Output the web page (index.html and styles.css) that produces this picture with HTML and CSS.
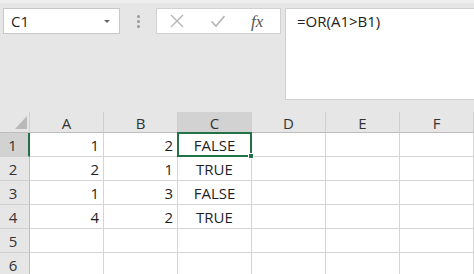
FILE: index.html
```html
<!DOCTYPE html>
<html lang="en">
<head>
    <meta charset="UTF-8">
    <title>OR formula</title>
    <link rel="stylesheet" href="styles.css">
</head>
<body>
    <div class="toolbar">
        <div class="name-box">
            <span>C1</span>
            <svg class="caret" width="8" height="5" viewBox="0 0 8 5"><path d="M1 1h6L4 4z" fill="#666"/></svg>
        </div>
        <div class="grip"><i></i><i></i><i></i></div>
        <div class="buttons">
            <svg class="btn" width="16" height="16" viewBox="0 0 16 16"><path d="M2 2L14 14M14 2L2 14" stroke="#b4b4b4" stroke-width="1.3" fill="none"/></svg>
            <svg class="btn" width="16" height="16" viewBox="0 0 16 16"><path d="M1.5 8.5L6 13L14.5 3" stroke="#b4b4b4" stroke-width="1.6" fill="none"/></svg>
            <span class="fx">fx</span>
        </div>
        <div class="formula">=OR(A1&gt;B1)</div>
    </div>

    <div class="sheet">
        <div class="corner"><span></span></div>
        <div class="col-head">A</div>
        <div class="col-head">B</div>
        <div class="col-head active">C</div>
        <div class="col-head">D</div>
        <div class="col-head">E</div>
        <div class="col-head">F</div>

        <div class="row-head active">1</div>
        <div class="cell num">1</div>
        <div class="cell num">2</div>
        <div class="cell bool selected">FALSE<b class="handle"></b></div>
        <div class="cell"></div><div class="cell"></div><div class="cell"></div>

        <div class="row-head">2</div>
        <div class="cell num">2</div>
        <div class="cell num">1</div>
        <div class="cell bool">TRUE</div>
        <div class="cell"></div><div class="cell"></div><div class="cell"></div>

        <div class="row-head">3</div>
        <div class="cell num">1</div>
        <div class="cell num">3</div>
        <div class="cell bool">FALSE</div>
        <div class="cell"></div><div class="cell"></div><div class="cell"></div>

        <div class="row-head">4</div>
        <div class="cell num">4</div>
        <div class="cell num">2</div>
        <div class="cell bool">TRUE</div>
        <div class="cell"></div><div class="cell"></div><div class="cell"></div>

        <div class="row-head">5</div>
        <div class="cell"></div><div class="cell"></div><div class="cell"></div>
        <div class="cell"></div><div class="cell"></div><div class="cell"></div>

        <div class="row-head">6</div>
        <div class="cell"></div><div class="cell"></div><div class="cell"></div>
        <div class="cell"></div><div class="cell"></div><div class="cell"></div>
    </div>
</body>
</html>
```

FILE: styles.css
```css
* {
    margin: 0;
    padding: 0;
    box-sizing: border-box;
}

body {
    width: 474px;
    height: 274px;
    overflow: hidden;
    font-family: 'Open Sans', 'Liberation Sans', sans-serif;
    background: #ffffff;
    color: #1f1f1f;
}

.toolbar {
    height: 112px;
    background: #e6e6e6;
    border-top: 3px solid #eeeeee;
    padding: 5px 0 0 3px;
    display: flex;
    align-items: flex-start;
}

.name-box {
    width: 117px;
    height: 26px;
    background: #ffffff;
    border: 1px solid #c8c8c8;
    display: flex;
    align-items: center;
    justify-content: space-between;
    padding: 0 8px 0 7px;
    font-size: 15px;
}

.grip {
    width: 36px;
    height: 26px;
    display: flex;
    flex-direction: column;
    align-items: center;
    justify-content: center;
    gap: 2px;
}

.grip i {
    width: 3px;
    height: 3px;
    border-radius: 50%;
    background: #9a9a9a;
}

.buttons {
    width: 125px;
    height: 26px;
    background: #ffffff;
    border: 1px solid #d2d2d2;
    display: flex;
    align-items: center;
    padding-left: 12px;
}

.btn {
    margin-right: 25px;
}

.fx {
    font-family: 'Liberation Serif', serif;
    font-style: italic;
    font-size: 17px;
    color: #555555;
    line-height: 1;
}

.formula {
    flex: 1;
    margin-left: 4px;
    height: 92px;
    background: #ffffff;
    border: 1px solid #d0d0d0;
    border-right: none;
    padding: 2px 0 0 11px;
    font-size: 15px;
    color: #222222;
}

.sheet {
    display: grid;
    grid-template-columns: 30px repeat(6, 74px);
    grid-template-rows: 21px repeat(6, 24px);
    font-size: 15px;
}

.corner {
    background: #e6e6e6;
    border-bottom: 1px solid #bdbdbd;
    border-right: 1px solid #d0d0d0;
    position: relative;
}

.corner span {
    position: absolute;
    right: 2px;
    bottom: 3px;
    width: 0;
    height: 0;
    border-left: 12px solid transparent;
    border-bottom: 13px solid #b9b9b9;
}

.col-head {
    background: #e6e6e6;
    border-bottom: 1px solid #bdbdbd;
    border-right: 1px solid #cfcfcf;
    display: flex;
    align-items: center;
    justify-content: center;
    color: #333333;
    padding-top: 1px;
}

.col-head.active {
    background: #d2d2d2;
    border-bottom: 1px solid #a6a6a6;
}

.row-head {
    background: #e6e6e6;
    border-bottom: 1px solid #d0d0d0;
    border-right: 1px solid #bdbdbd;
    display: flex;
    align-items: center;
    justify-content: center;
    color: #333333;
    padding-right: 3px;
}

.row-head.active {
    background: #d2d2d2;
    border-right: 2px solid #217346;
}

.cell {
    border-bottom: 1px solid #d5d5d5;
    border-right: 1px solid #d5d5d5;
    display: flex;
    align-items: center;
    padding: 0 4px;
}

.cell.num {
    justify-content: flex-end;
}

.cell.bool {
    justify-content: center;
}

.cell.selected {
    border: 2px solid #217346;
    margin: -1px 0 0 -1px;
    position: relative;
}

.handle {
    position: absolute;
    right: -4px;
    bottom: -4px;
    width: 6px;
    height: 6px;
    background: #217346;
    border: 1px solid #ffffff;
}
```
